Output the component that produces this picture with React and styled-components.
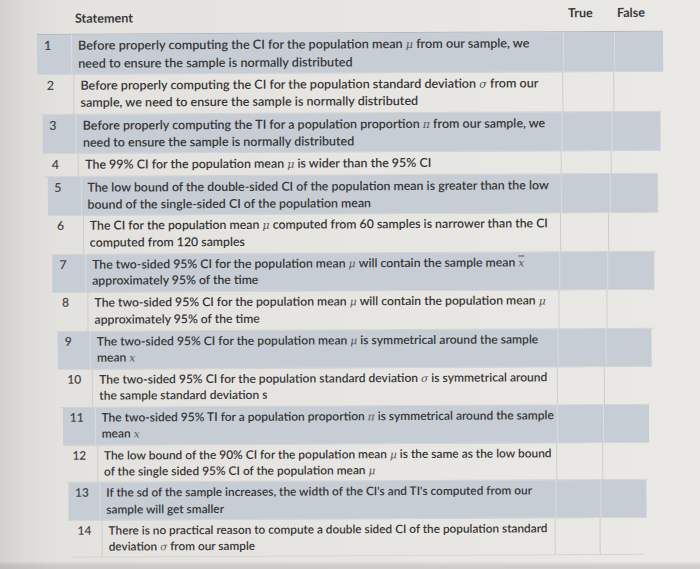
import React from "react";
import styled, { createGlobalStyle } from "styled-components";

const GlobalStyle = createGlobalStyle`
html, body {
  margin: 0;
  padding: 0;
}
body {
  width: 700px;
  height: 569px;
  overflow: hidden;
  font-family: Lato, "Liberation Sans", sans-serif;
  color: #363636;
  background:
    linear-gradient(180deg, rgba(0,0,0,0) 0, rgba(0,0,0,0) 561px, rgba(90,88,84,0.18) 566px),
    linear-gradient(90deg, #d3d1cd 0, #dcdad6 22px, #e4e2de 60px, #e8e6e2 400px, #ebe9e5 700px);
}
`;

const Page = styled.div`
  width: 700px;
  height: 569px;
  padding-top: 6px;
  box-sizing: border-box;
`;

const Table = styled.div`
  display: flex;
  flex-direction: column;
  transform: rotate(-0.3deg);
  transform-origin: 37px 30px;
`;

// t runs 0..1 from the first row to the last: the photo narrows the table as it goes down
const geometry = t => `
  grid-template-columns: ${35 - 3 * t}px 1fr ${51 - 6 * t}px ${48 - 4 * t}px;
  margin-left: ${37 + 31 * t}px;
  width: ${626 - 52 * t}px;
`;

const HeaderRow = styled.div`
  display: grid;
  ${p => geometry(p.$t)}
  height: 28px;
  align-items: start;
  border-bottom: 1px solid #b3b8bd;
  font-weight: 700;
  font-size: 12.6px;
  color: #3a3a3a;
`;

const HeadCell = styled.div`
  padding-left: ${p => p.$pad || 0}px;
  padding-top: ${p => p.$drop || 0}px;
`;

const Row = styled.div`
  display: grid;
  ${p => geometry(p.$t)}
  background: ${p => (p.$shade ? "#c6cdd4" : "transparent")};
  border-bottom: 1px solid ${p => (p.$shade ? "#d3d6d8" : "#d6d4d0")};
  font-size: ${p => 12.65 - 0.85 * p.$t}px;
  font-weight: 600;
  line-height: ${p => 17.5 - 1.4 * p.$t}px;
`;

const NumCell = styled.div`
  padding: 2px 0 2px 7px;
  border-right: 1px solid ${p => (p.$shade ? "#dadcdd" : "#cfcdc9")};
  color: #474747;
`;

const TextCell = styled.div`
  padding: 2px 0 2px 6px;
  border-right: 1px solid ${p => (p.$shade ? "#dadcdd" : "#cfcdc9")};
  white-space: nowrap;
  overflow: hidden;
`;

const TickCell = styled.div`
  border-right: ${p => (p.$last ? "none" : `1px solid ${p.$shade ? "#dadcdd" : "#cfcdc9"}`)};
`;

const Line = styled.div`
  height: 1lh;
`;

const Var = styled.span`
  font-family: "DejaVu Serif", "Liberation Serif", serif;
  font-style: italic;
  font-weight: 400;
  font-size: 0.88em;
  line-height: 0;
  color: #555;
`;

const Bar = styled.span`
  text-decoration: overline;
`;

const mu = <Var>μ</Var>;
const sigma = <Var>σ</Var>;
const pi = <Var>π</Var>;

const statements = [
  [<>Before properly computing the CI for the population mean {mu} from our sample, we</>, "need to ensure the sample is normally distributed"],
  [<>Before properly computing the CI for the population standard deviation {sigma} from our</>, "sample, we need to ensure the sample is normally distributed"],
  [<>Before properly computing the TI for a population proportion {pi} from our sample, we</>, "need to ensure the sample is normally distributed"],
  [<>The 99% CI for the population mean {mu} is wider than the 95% CI</>],
  ["The low bound of the double-sided CI of the population mean is greater than the low", "bound of the single-sided CI of the population mean"],
  [<>The CI for the population mean {mu} computed from 60 samples is narrower than the CI</>, "computed from 120 samples"],
  [<>The two-sided 95% CI for the population mean {mu} will contain the sample mean <Var><Bar>x</Bar></Var></>, "approximately 95% of the time"],
  [<>The two-sided 95% CI for the population mean {mu} will contain the population mean {mu}</>, "approximately 95% of the time"],
  [<>The two-sided 95% CI for the population mean {mu} is symmetrical around the sample</>, <>mean <Var>x</Var></>],
  [<>The two-sided 95% CI for the population standard deviation {sigma} is symmetrical around</>, "the sample standard deviation s"],
  [<>The two-sided 95% TI for a population proportion {pi} is symmetrical around the sample</>, <>mean <Var>x</Var></>],
  [<>The low bound of the 90% CI for the population mean {mu} is the same as the low bound</>, <>of the single sided 95% CI of the population mean {mu}</>],
  ["If the sd of the sample increases, the width of the CI's and TI's computed from our", "sample will get smaller"],
  ["There is no practical reason to compute a double sided CI of the population standard", <>deviation {sigma} from our sample</>],
];

const App = () => {
  return (
    <>
      <GlobalStyle />
      <Page>
        <Table>
          <HeaderRow $t={0}>
            <HeadCell />
            <HeadCell $pad={3} $drop={5}>Statement</HeadCell>
            <HeadCell $pad={4} $drop={2}>True</HeadCell>
            <HeadCell $pad={2} $drop={2}>False</HeadCell>
          </HeaderRow>
          {statements.map((lines, i) => {
            const t = i / (statements.length - 1);
            const shade = i % 2 === 0;
            return (
              <Row key={i} $t={t} $shade={shade}>
                <NumCell $shade={shade}>{i + 1}</NumCell>
                <TextCell $shade={shade}>
                  {lines.map((line, j) => (
                    <Line key={j}>{line}</Line>
                  ))}
                </TextCell>
                <TickCell $shade={shade} />
                <TickCell $shade={shade} $last />
              </Row>
            );
          })}
        </Table>
      </Page>
    </>
  );
};

export default App;
